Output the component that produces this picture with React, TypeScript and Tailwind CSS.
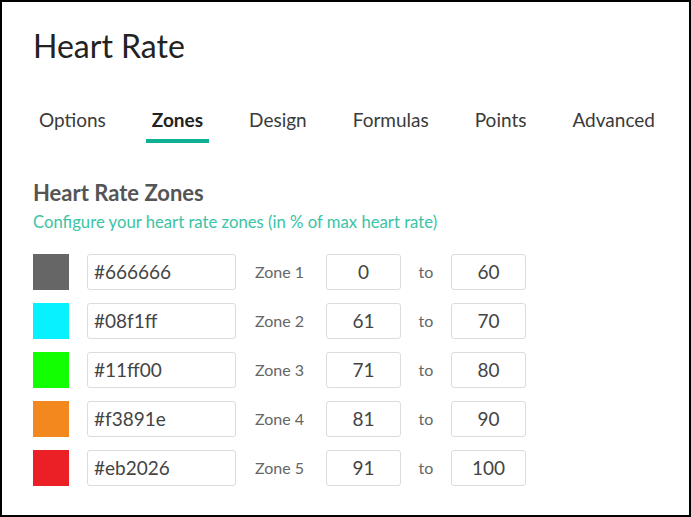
import React from "react";

const zones = [
  { color: "#666666", from: "0", to: "60" },
  { color: "#08f1ff", from: "61", to: "70" },
  { color: "#11ff00", from: "71", to: "80" },
  { color: "#f3891e", from: "81", to: "90" },
  { color: "#eb2026", from: "91", to: "100" },
];

const tabs = ["Options", "Zones", "Design", "Formulas", "Points", "Advanced"];

export default function App() {
  return (
    <div
      className="w-[691px] h-[517px] border-2 border-black bg-white overflow-hidden"
      style={{ fontFamily: "Lato, 'Open Sans', sans-serif" }}
    >
      <div className="pl-[31px] pt-[24px]">
        <h1 className="text-[32px] leading-[40px] text-[#222]">Heart Rate</h1>

        {/* Tabs */}
        <div className="mt-[43px] flex items-start gap-[34px] text-[19px] text-[#3a3a3a]">
          {tabs.map((t) => (
            <div key={t} className="flex flex-col items-stretch">
              <span
                className={
                  "px-[6px] leading-[22px] " +
                  (t === "Zones" ? "font-bold text-[#222]" : "")
                }
              >
                {t}
              </span>
              <div
                className={
                  "mt-[8px] h-[4px] " +
                  (t === "Zones" ? "bg-[#0fb194]" : "bg-transparent")
                }
              />
            </div>
          ))}
        </div>

        <h2 className="mt-[37px] text-[22px] leading-[26px] font-bold text-[#555]">
          Heart Rate Zones
        </h2>
        <p className="mt-[6px] text-[16.7px] leading-[20px] text-[#3cc3a5]">
          Configure your heart rate zones (in % of max heart rate)
        </p>

        <div className="mt-[22px] flex flex-col gap-[13px]">
          {zones.map((z, i) => (
            <div key={z.color} className="flex items-center h-[36px]">
              <div
                className="w-[36px] h-[36px]"
                style={{ backgroundColor: z.color }}
              />
              <div className="ml-[18px] w-[149px] h-[36px] border border-[#dcdcdc] rounded-[3px] flex items-center px-[6px] text-[19px] text-[#444]">
                {z.color}
              </div>
              <span className="ml-[19px] w-[71px] text-[16px] text-[#666]">
                Zone {i + 1}
              </span>
              <div className="w-[75px] h-[36px] border border-[#dcdcdc] rounded-[3px] flex items-center justify-center text-[19px] text-[#444]">
                {z.from}
              </div>
              <span className="w-[50px] text-center text-[16px] text-[#666]">to</span>
              <div className="w-[75px] h-[36px] border border-[#dcdcdc] rounded-[3px] flex items-center justify-center text-[19px] text-[#444]">
                {z.to}
              </div>
            </div>
          ))}
        </div>
      </div>
    </div>
  );
}
